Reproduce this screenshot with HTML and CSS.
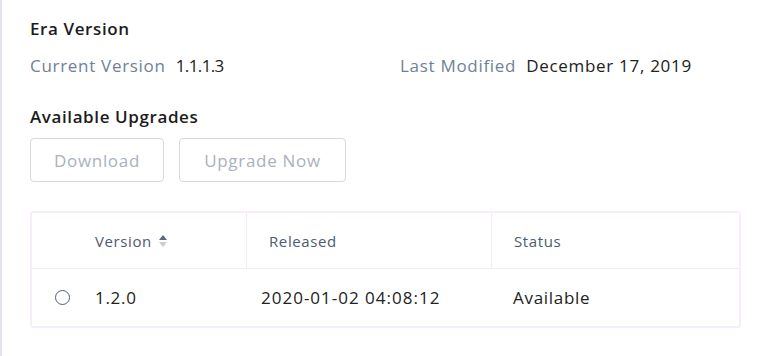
FILE: index.html
```html
<!DOCTYPE html>
<html>
<head>
<meta charset="utf-8">
<link rel="stylesheet" href="styles.css">
</head>
<body>
<div class="panel">
  <h2 class="title">Era Version</h2>
  <div class="meta">
    <div class="meta-item"><span class="label">Current Version</span><span class="value value-tight">1.1.1.3</span></div>
    <div class="meta-item"><span class="label">Last Modified</span><span class="value">December 17, 2019</span></div>
  </div>
  <h2 class="title title-upgrades">Available Upgrades</h2>
  <div class="actions">
    <button class="btn btn-download">Download</button>
    <button class="btn btn-upgrade">Upgrade Now</button>
  </div>
  <div class="table">
    <div class="thead">
      <div class="th th-version">Version
        <svg class="sort" width="8" height="14" viewBox="0 0 8 14"><path d="M4 1 L8 6 L0 6 Z" fill="#5d6878"/><path d="M0 8 L8 8 L4 13 Z" fill="#c9cdd5"/></svg>
      </div>
      <div class="th th-released">Released</div>
      <div class="th th-status">Status</div>
    </div>
    <div class="trow">
      <div class="td td-version"><span class="radio"></span>1.2.0</div>
      <div class="td td-released">2020-01-02 04:08:12</div>
      <div class="td td-status">Available</div>
    </div>
  </div>
</div>
</body>
</html>
```
FILE: styles.css
```css
html, body {
  margin: 0;
  padding: 0;
  background: #ffffff;
}
body {
  font-family: "Open Sans", "Liberation Sans", sans-serif;
  color: #222222;
}
.panel {
  border-left: 2px solid #e1e2eb;
  min-height: 356px;
  box-sizing: border-box;
  padding: 19px 0 0 28px;
}
.title {
  margin: 0;
  font-size: 17px;
  letter-spacing: 0.6px;
  line-height: 20px;
  font-weight: 600;
  color: #1c1c1c;
}
.meta {
  display: grid;
  grid-template-columns: 370px auto;
  margin-top: 17px;
  font-size: 17px;
  letter-spacing: 0.7px;
  line-height: 20px;
}
.meta-item {
  display: flex;
  gap: 10px;
}
.label {
  color: #6f8198;
}
.value {
  color: #222222;
}
.value-tight {
  letter-spacing: -0.6px;
}
.title-upgrades {
  margin-top: 31px;
}
.actions {
  display: flex;
  gap: 15px;
  margin-top: 11px;
}
.btn {
  height: 44px;
  box-sizing: border-box;
  border: 1px solid #d5d9e0;
  border-radius: 4px;
  background: #ffffff;
  color: #a9b1bf;
  font-family: inherit;
  font-size: 17px;
  letter-spacing: 0.7px;
  padding: 0;
}
.btn-download { width: 134px; }
.btn-upgrade { width: 167px; }
.table {
  margin-top: 29px;
  width: 711px;
  box-sizing: border-box;
  border: 2px solid #f8eefa;
  border-radius: 3px;
}
.thead, .trow {
  display: grid;
  grid-template-columns: 214px 245px auto;
}
.thead {
  height: 55px;
  border-bottom: 1px solid #eceff3;
}
.th {
  display: flex;
  align-items: center;
  font-size: 15px;
  letter-spacing: 0.6px;
  color: #4c5b6f;
  padding-left: 22px;
}
.th + .th {
  border-left: 1px solid #eceff3;
}
.th-version {
  padding-left: 63px;
  gap: 7px;
}
.trow {
  height: 57px;
}
.td {
  display: flex;
  align-items: center;
  font-size: 17px;
  letter-spacing: 0.7px;
  color: #222222;
}
.td-version {
  padding-left: 23px;
}
.radio {
  width: 15px;
  height: 15px;
  box-sizing: border-box;
  border: 1.5px solid #4f5f74;
  border-radius: 50%;
  margin-right: 25px;
}
.td-released {
  padding-left: 15px;
  letter-spacing: 1px;
}
.td-status {
  padding-left: 22px;
}
```
